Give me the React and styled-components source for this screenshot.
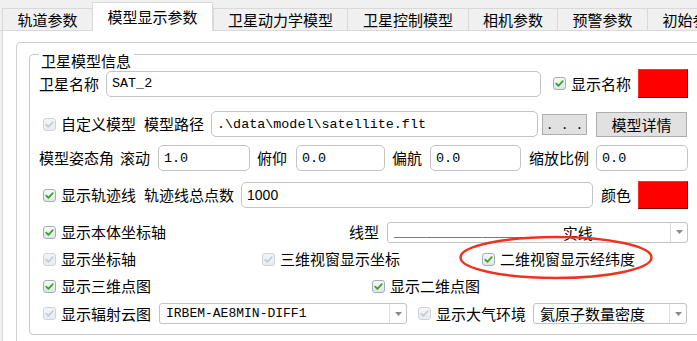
import React from "react";
import styled, { createGlobalStyle } from "styled-components";

const cjk = `"Noto Sans CJK SC", "Liberation Sans", sans-serif`;
const mono = `"Liberation Mono", "Noto Sans CJK SC", monospace`;

const GlobalStyle = createGlobalStyle`
  html, body {
    margin: 0;
    padding: 0;
    background: #f0f0f0;
  }
  body {
    font-family: ${cjk};
    font-size: 15px;
    color: #000;
  }
`;

const tabs = [
  { label: "轨道参数", w: 90 },
  { label: "模型显示参数", w: 121, active: true },
  { label: "卫星动力学模型", w: 134 },
  { label: "卫星控制模型", w: 121 },
  { label: "相机参数", w: 89 },
  { label: "预警参数", w: 90 },
  { label: "初始参数", w: 90 },
];

function Check({ on = true, disabled, children, w, ml }) {
  return (
    <CheckItem $w={w} $ml={ml}>
      <Box $disabled={disabled}>
        {on && (
          <svg width="11" height="11" viewBox="0 0 11 11">
            <path
              d="M2.2 5.6 L4.4 7.8 L8.8 3.2"
              fill="none"
              stroke={disabled ? "#c4cbd3" : "#35a51f"}
              strokeWidth="1.7"
              strokeLinecap="round"
              strokeLinejoin="round"
            />
          </svg>
        )}
      </Box>
      {children && <CheckText>{children}</CheckText>}
    </CheckItem>
  );
}

function Combo({ w, ml, children, small }) {
  return (
    <ComboBox $w={w} $ml={ml}>
      <ComboText $small={small}>{children}</ComboText>
      <ComboArrow>
        <svg width="7" height="4" viewBox="0 0 7 4">
          <path d="M0 0 H7 L3.5 4 Z" fill="#8a8a8a" />
        </svg>
      </ComboArrow>
    </ComboBox>
  );
}

export default function App() {
  return (
    <Window>
      <GlobalStyle />
      <TabBar>
        {tabs.map((t) => (
          <Tab key={t.label} $w={t.w} $active={t.active}>
            {t.label}
          </Tab>
        ))}
      </TabBar>
      <Panel>
        <OuterBox>
          <Group>
            <GroupTitle>卫星模型信息</GroupTitle>

            <Row $h={29} $mt={0}>
              <Label>卫星名称</Label>
              <Field $w={435} $ml={7}>SAT_2</Field>
              <Check ml={8}>显示名称</Check>
              <ColorBox $h={29} $ml={7} />
            </Row>

            <Row $h={26} $mt={13}>
              <Check disabled>自定义模型</Check>
              <Label $ml={8}>模型路径</Label>
              <Field $w={327} $ml={7}>.\data\model\satellite.flt</Field>
              <Button $w={45} $h={21} $ml={4}>
                <Dots>...</Dots>
              </Button>
              <Button $w={91} $h={25} $ml={9}>
                模型详情
              </Button>
            </Row>

            <Row $h={26} $mt={8}>
              <Label>模型姿态角</Label>
              <Label $ml={6}>滚动</Label>
              <Field $w={92} $ml={8}>1.0</Field>
              <Label $ml={7}>俯仰</Label>
              <Field $w={89} $ml={9}>0.0</Field>
              <Label $ml={7}>偏航</Label>
              <Field $w={91} $ml={8}>0.0</Field>
              <Label $ml={8}>缩放比例</Label>
              <Field $w={92} $ml={7}>0.0</Field>
            </Row>

            <Row $h={28} $mt={10}>
              <Check>显示轨迹线</Check>
              <Label $ml={8}>轨迹线总点数</Label>
              <Field $w={352} $ml={7} $sans>
                1000
              </Field>
              <Label $ml={8}>颜色</Label>
              <ColorBox $h={28} $ml={7} />
            </Row>

            <Row $h={22} $mt={12}>
              <Check>显示本体坐标轴</Check>
              <Label $auto>线型</Label>
              <Combo w={301} ml={8}>
                <Underline>_____________________</Underline>实线
              </Combo>
            </Row>

            <Row $h={22} $mt={5}>
              <Check disabled w={219}>
                显示坐标轴
              </Check>
              <Check disabled w={220}>
                三维视窗显示坐标
              </Check>
              <Check>二维视窗显示经纬度</Check>
            </Row>

            <Row $h={22} $mt={5}>
              <Check w={329}>显示三维点图</Check>
              <Check>显示二维点图</Check>
            </Row>

            <Row $h={23} $mt={5}>
              <Check disabled>显示辐射云图</Check>
              <Combo w={248} ml={8} small>
                IRBEM-AE8MIN-DIFF1
              </Combo>
              <Check disabled ml={7}>
                显示大气环境
              </Check>
              <Combo w={154} ml={7}>
                氦原子数量密度
              </Combo>
            </Row>
          </Group>
        </OuterBox>
      </Panel>

      <Highlight width="195" height="46" viewBox="0 0 195 46">
        <ellipse
          cx="97"
          cy="22.5"
          rx="95.5"
          ry="20.5"
          fill="none"
          stroke="#ec3320"
          strokeWidth="2.4"
        />
      </Highlight>
    </Window>
  );
}

const Window = styled.div`
  position: relative;
  width: 697px;
  height: 341px;
  overflow: hidden;
  background: #f0f0f0;
`;

const TabBar = styled.div`
  display: flex;
  align-items: flex-end;
  box-sizing: border-box;
  height: 31px;
  padding-left: 2px;
  border-bottom: 1px solid #d9d9d9;
`;

const Tab = styled.div`
  flex: none;
  box-sizing: border-box;
  position: relative;
  z-index: ${(p) => (p.$active ? 1 : 0)};
  display: flex;
  align-items: center;
  justify-content: center;
  width: ${(p) => p.$w}px;
  height: ${(p) => (p.$active ? 29 : 22)}px;
  margin-bottom: ${(p) => (p.$active ? -1 : 0)}px;
  padding-bottom: ${(p) => (p.$active ? 2 : 0)}px;
  border: 1px solid #d9d9d9;
  border-bottom: none;
  border-right: ${(p) => (p.$active ? "1px solid #d9d9d9" : "none")};
  background: ${(p) => (p.$active ? "#ffffff" : "#f0f0f0")};
  font-size: 15px;
  white-space: nowrap;
  overflow: hidden;
`;

const Panel = styled.div`
  box-sizing: border-box;
  height: 310px;
  margin-left: 2px;
  padding: 11px 0 0 13px;
  background: #ffffff;
  border-left: 1px solid #d9d9d9;
  overflow: hidden;
`;

const OuterBox = styled.div`
  box-sizing: border-box;
  width: 720px;
  height: 330px;
  padding: 11px 0 0 12px;
  border: 1px solid #cfcfcf;
  border-radius: 4px;
`;

const Group = styled.div`
  box-sizing: border-box;
  width: 672px;
  display: flex;
  flex-direction: column;
  padding: 0 12px 9px 9px;
  border: 1px solid #c9c9c9;
  border-radius: 4px;
`;

const GroupTitle = styled.div`
  align-self: flex-start;
  margin: -3px 0 0 0;
  padding: 0 3px 0 2px;
  background: #ffffff;
  font-size: 15px;
  line-height: 17px;
  white-space: nowrap;
`;

const Row = styled.div`
  display: flex;
  align-items: center;
  height: ${(p) => p.$h}px;
  margin-top: ${(p) => p.$mt}px;
`;

const Label = styled.span`
  flex: none;
  margin-left: ${(p) => (p.$auto ? "auto" : `${p.$ml || 0}px`)};
  font-size: 15px;
  line-height: 20px;
  white-space: nowrap;
`;

const Field = styled.div`
  flex: none;
  box-sizing: border-box;
  display: flex;
  align-items: center;
  width: ${(p) => p.$w}px;
  height: 26px;
  margin-left: ${(p) => p.$ml || 0}px;
  padding-left: ${(p) => (p.$sans ? 5 : 5)}px;
  background: #ffffff;
  border: 1px solid #c3c3c3;
  border-radius: 5px;
  font-family: ${(p) => (p.$sans ? `"Liberation Sans", sans-serif` : mono)};
  font-size: ${(p) => (p.$sans ? 14 : 13.4)}px;
  white-space: pre;
  overflow: hidden;
`;

const CheckItem = styled.div`
  flex: none;
  display: flex;
  align-items: center;
  width: ${(p) => (p.$w ? `${p.$w}px` : "auto")};
  margin-left: ${(p) => p.$ml || 0}px;
`;

const Box = styled.span`
  flex: none;
  box-sizing: border-box;
  display: flex;
  align-items: center;
  justify-content: center;
  width: 13px;
  height: 13px;
  margin-left: 4px;
  border: 1px solid ${(p) => (p.$disabled ? "#cdd3da" : "#a3adb9")};
  border-radius: 3px;
  background: ${(p) =>
    p.$disabled
      ? "linear-gradient(#f3f5f7, #e8ecf0)"
      : "linear-gradient(#f6f8fa, #dfe5ec)"};
`;

const CheckText = styled.span`
  margin-left: 5px;
  font-size: 15px;
  line-height: 20px;
  white-space: nowrap;
`;

const ColorBox = styled.div`
  flex: none;
  box-sizing: border-box;
  width: 50px;
  height: ${(p) => p.$h}px;
  margin-left: ${(p) => p.$ml || 0}px;
  background: #ff0000;
  border: 1px solid;
  border-color: #ff2a2a #6e0000 #6e0000 #ff2a2a;
`;

const Button = styled.div`
  flex: none;
  box-sizing: border-box;
  display: flex;
  align-items: center;
  justify-content: center;
  width: ${(p) => p.$w}px;
  height: ${(p) => p.$h}px;
  margin-left: ${(p) => p.$ml || 0}px;
  background: #e1e1e1;
  border: 1px solid #adadad;
  font-size: 15px;
  white-space: nowrap;
`;

const Dots = styled.span`
  letter-spacing: 7px;
  margin-left: 7px;
  margin-top: 3px;
  font-family: ${mono};
  font-size: 13px;
`;

const ComboBox = styled.div`
  flex: none;
  box-sizing: border-box;
  display: flex;
  align-items: stretch;
  width: ${(p) => p.$w}px;
  height: 21px;
  margin-left: ${(p) => p.$ml || 0}px;
  background: #ffffff;
  border: 1px solid #c3c3c3;
  border-radius: 3px;
  overflow: hidden;
`;

const ComboText = styled.div`
  flex: 1;
  display: flex;
  align-items: center;
  padding-left: ${(p) => (p.$small ? 6 : 6)}px;
  font-family: ${(p) => (p.$small ? mono : cjk)};
  font-size: ${(p) => (p.$small ? 13 : 15)}px;
  white-space: pre;
  overflow: hidden;
`;

const Underline = styled.span`
  font-family: ${mono};
  font-size: 13.4px;
`;

const ComboArrow = styled.div`
  flex: none;
  width: 16px;
  display: flex;
  align-items: center;
  justify-content: center;
  border-left: 1px solid #dcdcdc;
`;

const Highlight = styled.svg`
  position: absolute;
  left: 459px;
  top: 235px;
  pointer-events: none;
`;
